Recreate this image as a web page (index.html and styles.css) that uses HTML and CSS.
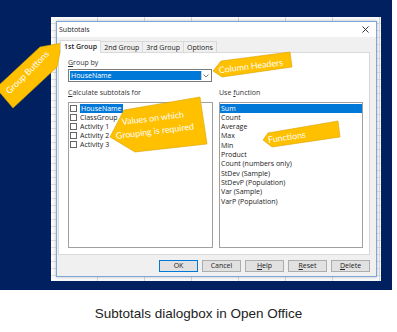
FILE: index.html
```html
<!DOCTYPE html>
<html lang="en">
<head>
    <meta charset="UTF-8">
    <title>Subtotals dialogbox</title>
    <link rel="stylesheet" href="styles.css">
</head>
<body>
    <div class="shot">
        <div class="sheet">
            <div class="dialog">
                <div class="titlebar">
                    <span>Subtotals</span>
                    <svg class="close" width="7" height="7" viewBox="0 0 7 7"><path d="M0.5 0.5 L6.5 6.5 M6.5 0.5 L0.5 6.5" stroke="#222" stroke-width="0.9"/></svg>
                </div>
                <div class="dialog-body">
                    <div class="tabs">
                        <div class="tab active">1st Group</div>
                        <div class="tab">2nd Group</div>
                        <div class="tab">3rd Group</div>
                        <div class="tab">Options</div>
                    </div>
                    <div class="page">
                        <div class="label"><u>G</u>roup by</div>
                        <div class="select">
                            <span class="select-text">HouseName</span>
                            <span class="select-btn">
                                <svg width="6" height="4" viewBox="0 0 6 4"><path d="M0.5 0.5 L3 3 L5.5 0.5" fill="none" stroke="#555" stroke-width="0.8"/></svg>
                            </span>
                        </div>
                        <div class="columns">
                            <div class="col">
                                <div class="label"><u>C</u>alculate subtotals for</div>
                                <div class="list">
                                    <div class="check-item"><span class="box"></span><span class="hl">HouseName</span></div>
                                    <div class="check-item"><span class="box"></span><span>ClassGroup</span></div>
                                    <div class="check-item"><span class="box"></span><span>Activity 1</span></div>
                                    <div class="check-item"><span class="box"></span><span>Activity 2</span></div>
                                    <div class="check-item"><span class="box"></span><span>Activity 3</span></div>
                                </div>
                            </div>
                            <div class="col">
                                <div class="label">Use <u>f</u>unction</div>
                                <div class="list">
                                    <div class="fn-item selected">Sum</div>
                                    <div class="fn-item">Count</div>
                                    <div class="fn-item">Average</div>
                                    <div class="fn-item">Max</div>
                                    <div class="fn-item">Min</div>
                                    <div class="fn-item">Product</div>
                                    <div class="fn-item">Count (numbers only)</div>
                                    <div class="fn-item">StDev (Sample)</div>
                                    <div class="fn-item">StDevP (Population)</div>
                                    <div class="fn-item">Var (Sample)</div>
                                    <div class="fn-item">VarP (Population)</div>
                                </div>
                            </div>
                        </div>
                    </div>
                    <div class="buttons">
                        <div class="btn default">OK</div>
                        <div class="btn">Cancel</div>
                        <div class="btn"><u>H</u>elp</div>
                        <div class="btn"><u>R</u>eset</div>
                        <div class="btn"><u>D</u>elete</div>
                    </div>
                </div>
            </div>
        </div>

        <!-- yellow callouts drawn on top of the screenshot -->
        <svg class="callouts" width="397" height="290" viewBox="0 0 397 290">
            <polygon class="callout" points="-4,88 40,47 62,43 57,67 13,108"/>
            <text class="callout-text" transform="translate(28,73) rotate(-45)">Group Buttons</text>

            <polygon class="callout" points="213,71 221,61 290,52 292,67 222,77"/>
            <text class="callout-text" transform="translate(251,67) rotate(-7)">Column Headers</text>

            <polygon class="callout" points="110,137 124,110 200,97 207,144 135,152"/>
            <text class="callout-text" transform="translate(153,119) rotate(-7)">Values on which</text>
            <text class="callout-text" transform="translate(155,132) rotate(-7)">Grouping is required</text>

            <polygon class="callout" points="263,140 268,133 338,121 340,137 272,147"/>
            <text class="callout-text" transform="translate(287,138) rotate(-8)">Functions</text>
        </svg>
    </div>

    <p class="caption">Subtotals dialogbox in Open Office</p>
</body>
</html>
```

FILE: styles.css
```css
* {
    margin: 0;
    padding: 0;
    box-sizing: border-box;
}

body {
    font-family: 'Open Sans', sans-serif;
    background-color: #fff;
    color: #222;
}

.shot {
    position: relative;
    width: 392px;
    height: 290px;
    background-color: #002060;
    padding: 17px 11px 9px 51px;
}

.sheet {
    height: 100%;
    padding: 4px 4px 4px 5px;
    background-color: #fafafa;
    background-image:
        repeating-linear-gradient(90deg, transparent 0 46px, #d6d6d6 46px 47px),
        repeating-linear-gradient(180deg, transparent 0 6px, #dedede 6px 7px);
}

.dialog {
    height: 100%;
    display: flex;
    flex-direction: column;
    background-color: #f0f0f0;
    border: 1px solid #7aa6dc;
    box-shadow: 0 0 3px rgba(0, 0, 0, 0.25);
    font-size: 7px;
}

.titlebar {
    height: 15px;
    background-color: #fff;
    display: flex;
    align-items: center;
    justify-content: space-between;
    padding: 0 7px 0 2px;
}

.dialog-body {
    flex: 1;
    display: flex;
    flex-direction: column;
    padding: 3px 6px 3px 1px;
}

.tabs {
    display: flex;
    padding-left: 2px;
    height: 12px;
}

.tab {
    line-height: 11px;
    padding: 0 3px;
    border: 1px solid #d9d9d9;
    border-bottom: none;
    border-left: none;
    background-color: #f0f0f0;
    margin-top: 1px;
    height: 11px;
}

.tab.active {
    background-color: #fff;
    border-left: 1px solid #d9d9d9;
    margin-top: 0;
    height: 13px;
    font-weight: 600;
    position: relative;
    z-index: 1;
}

.page {
    height: 203px;
    background-color: #fff;
    border: 1px solid #d9d9d9;
    padding: 5px 6px 6px 9px;
}

.label {
    height: 9px;
    line-height: 9px;
    color: #333;
}

.select {
    width: 144px;
    height: 13px;
    margin-top: 2px;
    border: 1px solid #7a7a7a;
    display: flex;
    padding: 1px;
    background-color: #fff;
}

.select-text {
    flex: 1;
    background-color: #0078d7;
    color: #fff;
    line-height: 9px;
    padding-left: 1px;
}

.select-btn {
    width: 9px;
    display: flex;
    align-items: center;
    justify-content: center;
    border-left: 1px solid #ccc;
}

.columns {
    display: flex;
    gap: 6px;
    margin-top: 6px;
}

.col {
    width: 145px;
}

.col + .col {
    width: 144px;
}

.list {
    margin-top: 5px;
    height: 146px;
    border: 1px solid #a0a0a0;
    padding-top: 0.5px;
}

.check-item {
    height: 9.2px;
    line-height: 9.2px;
    display: flex;
    align-items: center;
    padding-left: 1px;
}

.box {
    width: 7px;
    height: 7px;
    border: 1px solid #666;
    margin-right: 3px;
}

.hl {
    background-color: #0078d7;
    color: #fff;
    padding: 0 1px;
}

.fn-item {
    height: 9.33px;
    line-height: 9.33px;
    padding-left: 1px;
}

.fn-item.selected {
    background-color: #0078d7;
    color: #fff;
}

.buttons {
    display: flex;
    justify-content: flex-end;
    gap: 4px;
    margin-top: 5px;
}

.btn {
    width: 39px;
    height: 12px;
    line-height: 10px;
    text-align: center;
    background-color: #e1e1e1;
    border: 1px solid #adadad;
}

.btn.default {
    border-color: #0078d7;
}

.callouts {
    position: absolute;
    left: 0;
    top: 0;
    overflow: visible;
}

.callout {
    fill: #ffc000;
    stroke: #d9a300;
    stroke-width: 0.6;
}

.callout-text {
    fill: #fff;
    font-family: 'Lato', sans-serif;
    font-size: 8.8px;
    text-anchor: middle;
    dominant-baseline: middle;
}

.caption {
    height: 42px;
    line-height: 48px;
    text-align: center;
    font-family: 'Liberation Sans', Arial, sans-serif;
    font-size: 13.5px;
    color: #222;
}
```
